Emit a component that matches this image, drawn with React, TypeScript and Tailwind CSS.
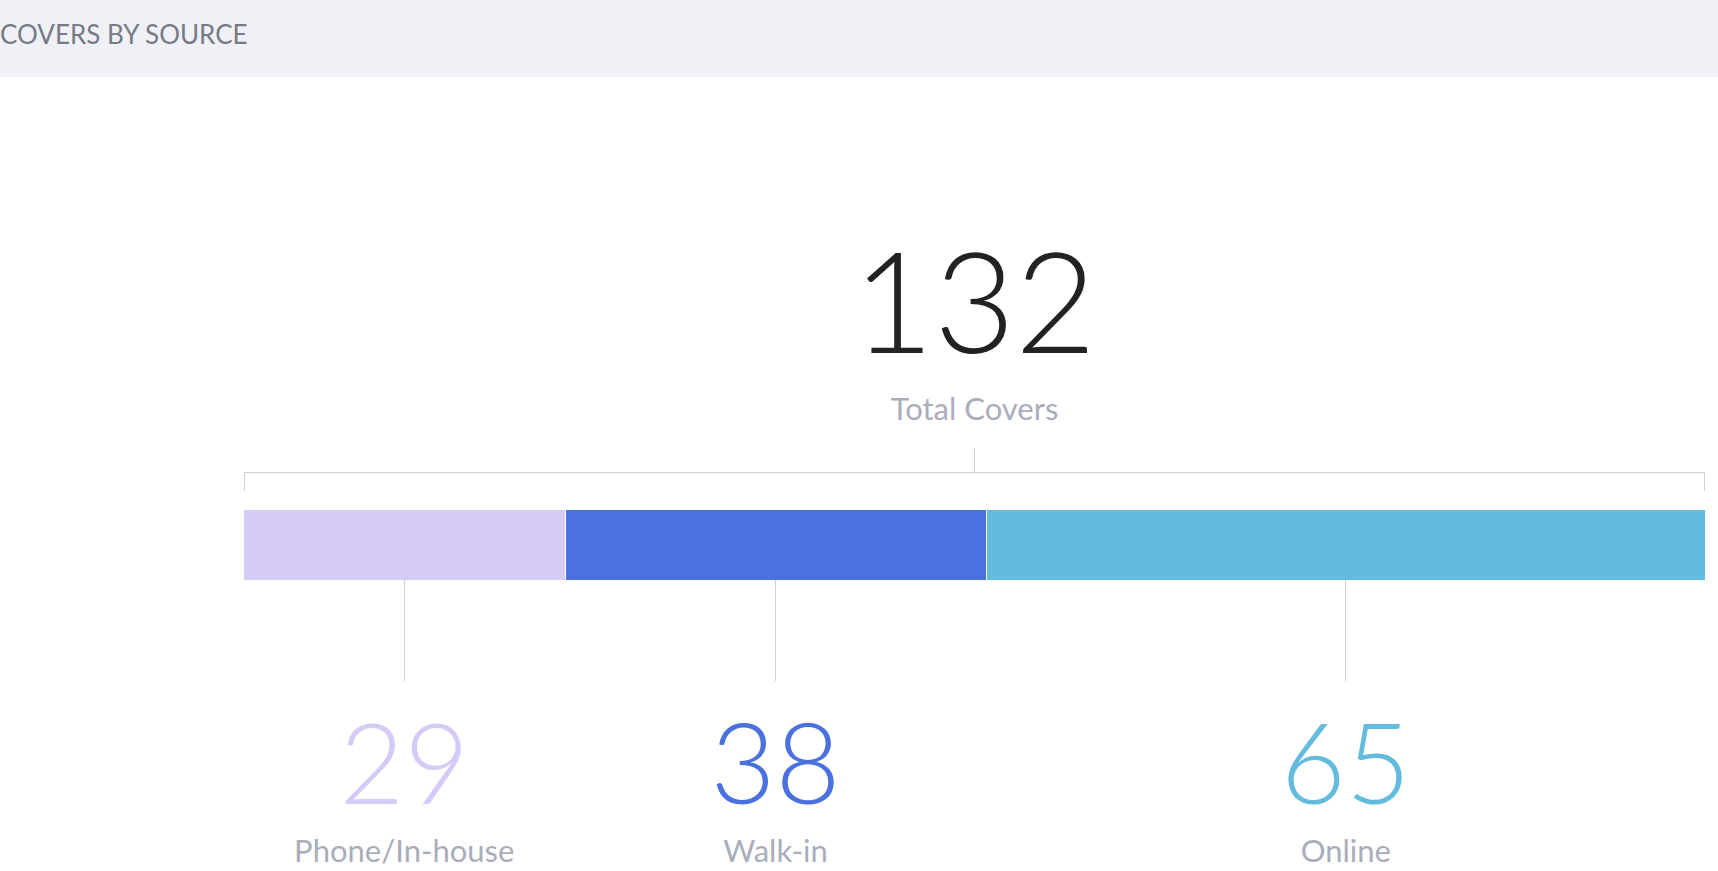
export default function App() {
  const segs = [
    { v: 29, label: "Phone/In-house", color: "bg-[#d6cbf6]", text: "text-[#d6cbf6]" },
    { v: 38, label: "Walk-in", color: "bg-[#4a71de]", text: "text-[#4a71de]" },
    { v: 65, label: "Online", color: "bg-[#63bbdd]", text: "text-[#63bbdd]" },
  ];
  return (
    <div className="w-[1718px] h-[871px] overflow-hidden bg-white font-[Lato]">
      <div className="h-[77px] bg-[#f0f1f5] flex items-center">
        <span className="text-[26px] text-[#767a88] leading-none -mt-[9px]">COVERS BY SOURCE</span>
      </div>
      <div className="pl-[244px] pr-[13px]">
        <div className="flex flex-col items-center pt-[172px]">
          <div className="text-[140px] leading-[100px] text-[#222] font-light">132</div>
          <div className="text-[31px] text-[#a9adbb] mt-[44px] leading-none">Total Covers</div>
        </div>
        <div className="flex flex-col mt-[24px]">
          <div className="self-center w-px h-[24px] bg-[#cfd0dc]" />
          <div className="h-[19px] border-t border-l border-r border-[#cfd0dc]" />
        </div>
        <div className="flex gap-px mt-[19px] h-[70px]">
          {segs.map((s) => (
            <div key={s.label} className={`${s.color} h-full`} style={{ flex: s.v }} />
          ))}
        </div>
        <div className="flex gap-px">
          {segs.map((s) => (
            <div key={s.label} className="flex flex-col items-center" style={{ flex: s.v }}>
              <div className="w-px h-[101px] bg-[#cfd0dc]" />
              <div className={`${s.text} text-[112px] font-light leading-none mt-[24px]`}>{s.v}</div>
              <div className="text-[31px] text-[#a9adbb] leading-none mt-[18px] whitespace-nowrap">{s.label}</div>
            </div>
          ))}
        </div>
      </div>
    </div>
  );
}
